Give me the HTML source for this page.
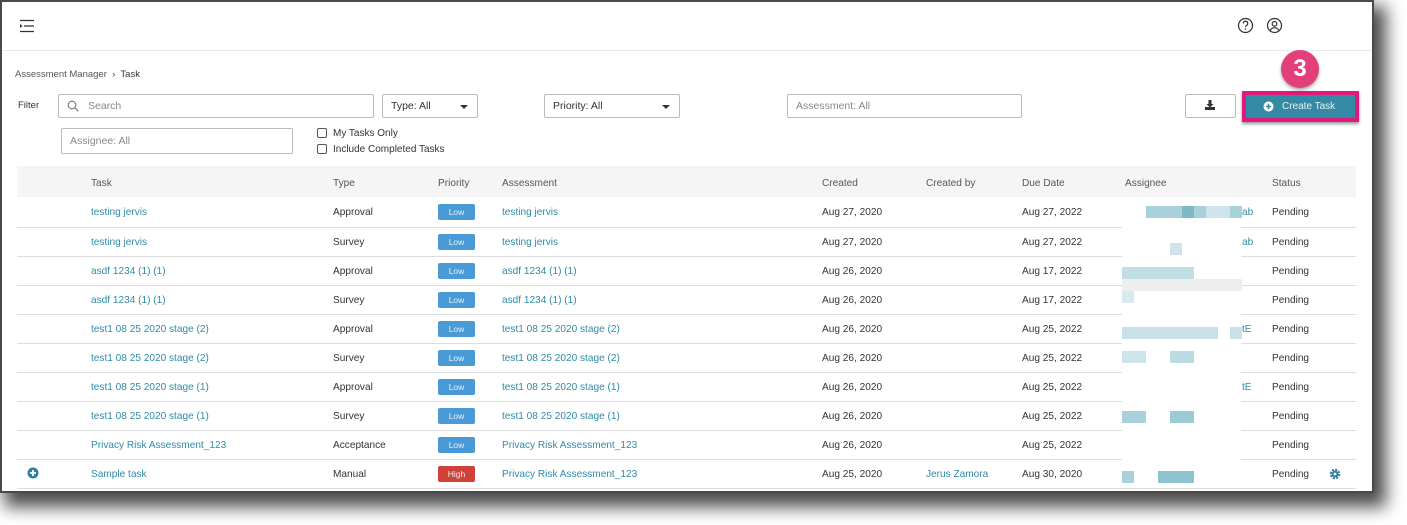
<!DOCTYPE html>
<html><head><meta charset="utf-8"><style>
*{margin:0;padding:0;box-sizing:border-box}
body{width:1407px;height:525px;background:#fff;position:relative;overflow:hidden;font-family:"Liberation Sans",sans-serif;font-size:10.1px;color:#333}
.a{position:absolute}
#panel{left:0;top:0;width:1374px;height:493px;border:2px solid #4a4a4a;background:#fff;box-shadow:8px 10px 16px 4px rgba(0,0,0,.7)}
.inp{position:absolute;border:1px solid #bbb;border-radius:2px;height:24px;background:#fff;color:#888;font-size:10.5px;line-height:23px;padding-left:8px}
.sel{color:#333}
.caret{position:absolute;right:9px;top:10px;border-left:4px solid transparent;border-right:4px solid transparent;border-top:4px solid #333}
.cb{position:absolute;width:10px;height:10px;border:1px solid #555;border-radius:2px}
.hd{position:absolute;top:166px;left:17px;width:1339px;height:31px;background:#f5f5f5}
.t{position:absolute;white-space:nowrap;line-height:14px;margin-top:1px}
.lk{color:#2f8ba6}
.ln{position:absolute;left:17px;width:1339px;height:1px;background:#ddd}
.b{position:absolute;left:438px;width:37px;height:16px;border-radius:2px;background:#4a9ad6;color:#e8f2fb;font-size:8.5px;text-align:center;line-height:16px}
.px{position:absolute;height:12px}
</style></head><body>
<div id="panel" class="a"></div>
<svg class="a" style="left:19px;top:19px" width="16" height="14" viewBox="0 0 16 14"><path d="M1 1.5h14M5 7h10M1 12.5h14" stroke="#333" stroke-width="1.3"/><path d="M1 5l2.5 2-2.5 2z" fill="#333"/></svg>
<div class="a" style="left:2px;top:50px;width:1370px;height:1px;background:#e8e8e8"></div>
<svg class="a" style="left:1237px;top:17px" width="17" height="17" viewBox="0 0 17 17"><circle cx="8.5" cy="8.5" r="7" fill="none" stroke="#333" stroke-width="1.2"/><path d="M6.3 6.5a2.2 2.2 0 1 1 3 2c-.6.3-.8.7-.8 1.4" fill="none" stroke="#333" stroke-width="1.2"/><circle cx="8.5" cy="12" r=".8" fill="#333"/></svg>
<svg class="a" style="left:1266px;top:17px" width="17" height="17" viewBox="0 0 17 17"><circle cx="8.5" cy="8.5" r="7" fill="none" stroke="#333" stroke-width="1.2"/><circle cx="8.5" cy="6.8" r="2.3" fill="none" stroke="#333" stroke-width="1.2"/><path d="M4.3 13.3c1-1.8 2.5-2.6 4.2-2.6s3.2.8 4.2 2.6" fill="none" stroke="#333" stroke-width="1.2"/></svg>
<div class="t" style="left:15px;top:67px;font-size:9.5px;color:#555">Assessment Manager <span style="color:#333">&nbsp;›&nbsp; Task</span></div>
<div class="t" style="left:18px;top:98px;font-size:9.5px">Filter</div>
<div class="inp" style="left:58px;top:94px;width:316px;padding-left:29px">Search</div>
<svg class="a" style="left:67px;top:100px" width="12" height="12" viewBox="0 0 12 12"><circle cx="5" cy="5" r="3.8" fill="none" stroke="#888" stroke-width="1.3"/><path d="M7.8 7.8l3.4 3.4" stroke="#888" stroke-width="1.4"/></svg>
<div class="inp sel" style="left:382px;top:94px;width:96px">Type: All<span class="caret"></span></div>
<div class="inp sel" style="left:544px;top:94px;width:136px">Priority: All<span class="caret"></span></div>
<div class="inp" style="left:787px;top:94px;width:235px">Assessment: All</div>
<div class="inp" style="left:61px;top:128px;width:232px;height:26px;line-height:25px">Assignee: All</div>
<div class="cb" style="left:317px;top:128px"></div><div class="t" style="left:333px;top:126px;font-size:10px">My Tasks Only</div>
<div class="cb" style="left:317px;top:144px"></div><div class="t" style="left:333px;top:142px;font-size:10px">Include Completed Tasks</div>
<div class="inp" style="left:1185px;top:94px;width:51px;border-color:#bbb"></div>
<svg class="a" style="left:1204px;top:99px" width="12" height="12" viewBox="0 0 12 12"><path d="M4.5 1h3v4h2L6 8.5 2.5 5h2z" fill="#333"/><path d="M1 8v3h10V8" fill="#333"/></svg>
<div class="a" style="left:1242px;top:91px;width:117px;height:31px;background:#e0197a;box-shadow:0 2px 3px rgba(0,0,0,.4)"></div>
<div class="a" style="left:1246px;top:95px;width:109px;height:23px;background:#3489a4;color:#e6f3f7;font-size:10px;line-height:23px;padding-left:36px">Create Task</div>
<svg class="a" style="left:1263px;top:101px" width="11" height="11" viewBox="0 0 11 11"><circle cx="5.5" cy="5.5" r="5" fill="#fff"/><path d="M5.5 2.8v5.4M2.8 5.5h5.4" stroke="#3489a4" stroke-width="1.6"/></svg>
<div class="a" style="left:1281px;top:50px;width:38px;height:38px;border-radius:50%;background:#e3407b;color:#fff;font-weight:bold;font-size:24px;text-align:center;line-height:38px;box-shadow:0 2px 3px rgba(0,0,0,.35)">3</div>
<div class="hd"></div>
<div class="t" style="left:91px;top:176px;color:#555">Task</div>
<div class="t" style="left:333px;top:176px;color:#555">Type</div>
<div class="t" style="left:438px;top:176px;color:#555">Priority</div>
<div class="t" style="left:502px;top:176px;color:#555">Assessment</div>
<div class="t" style="left:822px;top:176px;color:#555">Created</div>
<div class="t" style="left:926px;top:176px;color:#555">Created by</div>
<div class="t" style="left:1022px;top:176px;color:#555">Due Date</div>
<div class="t" style="left:1125px;top:176px;color:#555">Assignee</div>
<div class="t" style="left:1272px;top:176px;color:#555">Status</div>

<div class="t lk" style="left:91px;top:205px">testing jervis</div><div class="t" style="left:333px;top:205px">Approval</div><div class="b" style="top:204px">Low</div><div class="t lk" style="left:502px;top:205px">testing jervis</div><div class="t" style="left:822px;top:205px">Aug 27, 2020</div><div class="t" style="left:1022px;top:205px">Aug 27, 2022</div><div class="t" style="left:1272px;top:205px">Pending</div><div class="ln" style="top:227px"></div>
<div class="t lk" style="left:91px;top:235px">testing jervis</div><div class="t" style="left:333px;top:235px">Survey</div><div class="b" style="top:234px">Low</div><div class="t lk" style="left:502px;top:235px">testing jervis</div><div class="t" style="left:822px;top:235px">Aug 27, 2020</div><div class="t" style="left:1022px;top:235px">Aug 27, 2022</div><div class="t" style="left:1272px;top:235px">Pending</div><div class="ln" style="top:256px"></div>
<div class="t lk" style="left:91px;top:264px">asdf 1234 (1) (1)</div><div class="t" style="left:333px;top:264px">Approval</div><div class="b" style="top:263px">Low</div><div class="t lk" style="left:502px;top:264px">asdf 1234 (1) (1)</div><div class="t" style="left:822px;top:264px">Aug 26, 2020</div><div class="t" style="left:1022px;top:264px">Aug 17, 2022</div><div class="t" style="left:1272px;top:264px">Pending</div><div class="ln" style="top:285px"></div>
<div class="t lk" style="left:91px;top:293px">asdf 1234 (1) (1)</div><div class="t" style="left:333px;top:293px">Survey</div><div class="b" style="top:292px">Low</div><div class="t lk" style="left:502px;top:293px">asdf 1234 (1) (1)</div><div class="t" style="left:822px;top:293px">Aug 26, 2020</div><div class="t" style="left:1022px;top:293px">Aug 17, 2022</div><div class="t" style="left:1272px;top:293px">Pending</div><div class="ln" style="top:314px"></div>
<div class="t lk" style="left:91px;top:322px">test1 08 25 2020 stage (2)</div><div class="t" style="left:333px;top:322px">Approval</div><div class="b" style="top:321px">Low</div><div class="t lk" style="left:502px;top:322px">test1 08 25 2020 stage (2)</div><div class="t" style="left:822px;top:322px">Aug 26, 2020</div><div class="t" style="left:1022px;top:322px">Aug 25, 2022</div><div class="t" style="left:1272px;top:322px">Pending</div><div class="ln" style="top:343px"></div>
<div class="t lk" style="left:91px;top:351px">test1 08 25 2020 stage (2)</div><div class="t" style="left:333px;top:351px">Survey</div><div class="b" style="top:350px">Low</div><div class="t lk" style="left:502px;top:351px">test1 08 25 2020 stage (2)</div><div class="t" style="left:822px;top:351px">Aug 26, 2020</div><div class="t" style="left:1022px;top:351px">Aug 25, 2022</div><div class="t" style="left:1272px;top:351px">Pending</div><div class="ln" style="top:372px"></div>
<div class="t lk" style="left:91px;top:380px">test1 08 25 2020 stage (1)</div><div class="t" style="left:333px;top:380px">Approval</div><div class="b" style="top:379px">Low</div><div class="t lk" style="left:502px;top:380px">test1 08 25 2020 stage (1)</div><div class="t" style="left:822px;top:380px">Aug 26, 2020</div><div class="t" style="left:1022px;top:380px">Aug 25, 2022</div><div class="t" style="left:1272px;top:380px">Pending</div><div class="ln" style="top:401px"></div>
<div class="t lk" style="left:91px;top:409px">test1 08 25 2020 stage (1)</div><div class="t" style="left:333px;top:409px">Survey</div><div class="b" style="top:408px">Low</div><div class="t lk" style="left:502px;top:409px">test1 08 25 2020 stage (1)</div><div class="t" style="left:822px;top:409px">Aug 26, 2020</div><div class="t" style="left:1022px;top:409px">Aug 25, 2022</div><div class="t" style="left:1272px;top:409px">Pending</div><div class="ln" style="top:430px"></div>
<div class="t lk" style="left:91px;top:438px">Privacy Risk Assessment_123</div><div class="t" style="left:333px;top:438px">Acceptance</div><div class="b" style="top:437px">Low</div><div class="t lk" style="left:502px;top:438px">Privacy Risk Assessment_123</div><div class="t" style="left:822px;top:438px">Aug 26, 2020</div><div class="t" style="left:1022px;top:438px">Aug 25, 2022</div><div class="t" style="left:1272px;top:438px">Pending</div><div class="ln" style="top:459px"></div>
<svg class="a" style="left:27px;top:467px" width="12" height="12" viewBox="0 0 12 12"><circle cx="6" cy="6" r="5.5" fill="#2f7f9c"/><path d="M6 3v6M3 6h6" stroke="#fff" stroke-width="1.8"/></svg>
<div class="t lk" style="left:91px;top:467px">Sample task</div><div class="t" style="left:333px;top:467px">Manual</div><div class="b" style="top:466px;background:#d0413a">High</div><div class="t lk" style="left:502px;top:467px">Privacy Risk Assessment_123</div><div class="t" style="left:822px;top:467px">Aug 25, 2020</div><div class="t lk" style="left:926px;top:467px">Jerus Zamora</div><div class="t" style="left:1022px;top:467px">Aug 30, 2020</div><div class="t" style="left:1272px;top:467px">Pending</div><div class="ln" style="top:488px"></div>
<svg class="a" style="left:1329px;top:468px" width="12" height="12" viewBox="0 0 12 12"><circle cx="6" cy="6" r="4" fill="none" stroke="#2f7f9c" stroke-width="2.6" stroke-dasharray="2 1.15"/><circle cx="6" cy="6" r="3.2" fill="#2f7f9c"/><circle cx="6" cy="6" r="1.4" fill="#fff"/></svg>
<div class="a" style="left:1122px;top:198px;width:119px;height:289px;background:#fff"></div>
<div class="px" style="left:1146px;top:206px;width:96px;background:#a9d1db"></div>
<div class="px" style="left:1182px;top:206px;width:12px;background:#7fb8c7"></div>
<div class="px" style="left:1206px;top:206px;width:24px;background:#cfe4ea"></div>
<div class="px" style="left:1170px;top:243px;width:12px;background:#cfe4ea"></div>
<div class="px" style="left:1122px;top:267px;width:72px;background:#c2dee5"></div>
<div class="a" style="left:1122px;top:279px;width:120px;height:12px;background:#eee"></div>
<div class="px" style="left:1122px;top:291px;width:12px;background:#d8eaee"></div>
<div class="px" style="left:1122px;top:327px;width:96px;background:#c8e1e8"></div>
<div class="px" style="left:1230px;top:327px;width:12px;background:#c8e1e8"></div>
<div class="px" style="left:1122px;top:351px;width:24px;background:#cfe4ea"></div>
<div class="px" style="left:1170px;top:351px;width:24px;background:#bcdbe2"></div>
<div class="px" style="left:1122px;top:411px;width:24px;background:#a9d1db"></div>
<div class="px" style="left:1170px;top:411px;width:24px;background:#9ccbd5"></div>
<div class="px" style="left:1122px;top:471px;width:12px;background:#a9d1db"></div>
<div class="px" style="left:1158px;top:471px;width:36px;background:#8fc3cf"></div>
<div class="t lk" style="left:1242px;top:205px">ab</div><div class="t lk" style="left:1242px;top:235px">ab</div>
<div class="t lk" style="left:1242px;top:322px">tE</div><div class="t lk" style="left:1242px;top:380px">tE</div>
</body></html>
